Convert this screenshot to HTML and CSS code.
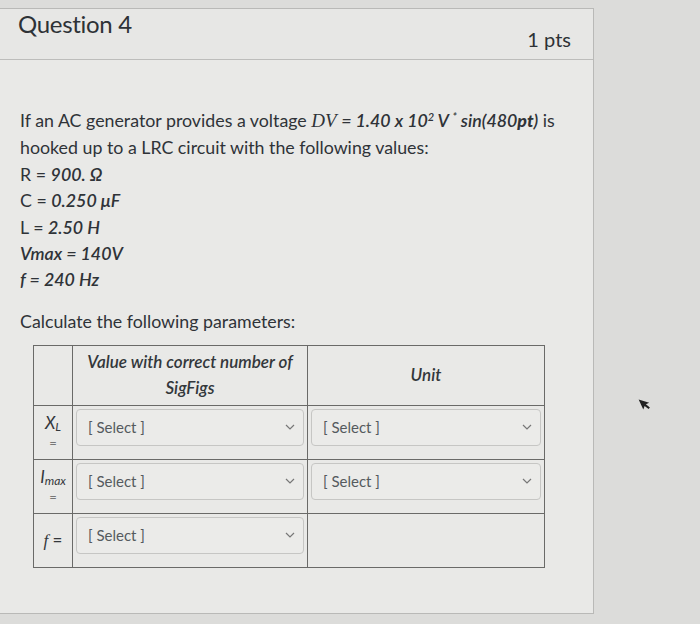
FILE: index.html
```html
<!DOCTYPE html>
<html>
<head>
<meta charset="utf-8">
<link rel="stylesheet" href="styles.css">
</head>
<body>
<div class="screen">
  <div class="card">
    <div class="card-header">
      <h2 class="title">Question 4</h2>
      <span class="pts">1 pts</span>
    </div>
    <div class="card-body">
      <p class="lines">If an AC generator provides a voltage <span class="math">DV</span> <i>= 1.40 x 10<sup>2</sup> V <sup>*</sup> sin(480<b>pt</b>)</i> is<br>
      hooked up to a LRC circuit with the following values:<br>
      R = <i>900. Ω</i><br>
      C = <i>0.250 μF</i><br>
      L = <i>2.50 H</i><br>
      <i>Vmax = 140V</i><br>
      <i>f = 240 Hz</i></p>
      <p class="calc">Calculate the following parameters:</p>
      <table class="grid">
        <colgroup><col class="k1"><col class="k2"><col class="k3"></colgroup>
        <tr class="head">
          <th></th>
          <th class="c2">Value with correct number of SigFigs</th>
          <th>Unit</th>
        </tr>
        <tr class="row">
          <td class="lbl"><i>X<sub>L</sub></i><br><span class="eq">=</span></td>
          <td><div class="sel"><span>[ Select ]</span><svg class="chev" viewBox="0 0 10 6" width="10" height="6"><path d="M1 1 L5 5 L9 1" fill="none" stroke="#777" stroke-width="1.2"/></svg></div></td>
          <td><div class="sel"><span>[ Select ]</span><svg class="chev" viewBox="0 0 10 6" width="10" height="6"><path d="M1 1 L5 5 L9 1" fill="none" stroke="#777" stroke-width="1.2"/></svg></div></td>
        </tr>
        <tr class="row">
          <td class="lbl"><i>I<sub>max</sub></i><br><span class="eq">=</span></td>
          <td><div class="sel"><span>[ Select ]</span><svg class="chev" viewBox="0 0 10 6" width="10" height="6"><path d="M1 1 L5 5 L9 1" fill="none" stroke="#777" stroke-width="1.2"/></svg></div></td>
          <td><div class="sel"><span>[ Select ]</span><svg class="chev" viewBox="0 0 10 6" width="10" height="6"><path d="M1 1 L5 5 L9 1" fill="none" stroke="#777" stroke-width="1.2"/></svg></div></td>
        </tr>
        <tr class="row">
          <td class="lbl last"><i class="fsym">f</i> =</td>
          <td><div class="sel"><span>[ Select ]</span><svg class="chev" viewBox="0 0 10 6" width="10" height="6"><path d="M1 1 L5 5 L9 1" fill="none" stroke="#777" stroke-width="1.2"/></svg></div></td>
          <td></td>
        </tr>
      </table>
    </div>
  </div>
  <svg class="cursor" viewBox="0 0 12 16" width="11" height="15"><path d="M1 1 L1 13 L4 10 L6.5 15 L8.5 14 L6 9 L10 9 Z" fill="#222"/></svg>
</div>
</body>
</html>
```
FILE: styles.css
```css
html, body {
  margin: 0;
  padding: 0;
}
body {
  background: #dcdcda;
  font-family: Lato, "Open Sans", sans-serif;
  color: #2d3b45;
  width: 700px;
  height: 624px;
  overflow: hidden;
}
.screen {
  position: relative;
  width: 700px;
  height: 624px;
}
.card {
  width: 594px;
  height: 606px;
  margin-top: 8px;
  background: #e9e9e7;
  border-right: 1px solid #b9b9b7;
  border-top: 1px solid #b9b9b7;
  border-bottom: 1px solid #b9b9b7;
  box-sizing: border-box;
}
.card-header {
  display: flex;
  justify-content: space-between;
  align-items: flex-start;
  height: 50px;
  border-bottom: 1px solid #bdbdbb;
  background: #e7e7e5;
  padding: 0 22px 0 18px;
}
.title {
  margin: 0;
  font-size: 24px;
  line-height: 30px;
  font-weight: 400;
  color: #2e3236;
  letter-spacing: -0.3px;
}
.pts {
  margin-top: 18px;
  font-size: 20px;
  font-weight: 400;
  color: #2e3236;
}
.card-body {
  padding: 47px 0 0 20px;
  color: #2f3338;
}
.lines {
  margin: 0;
  font-size: 17.8px;
  line-height: 26.4px;
}
.lines i {
  font-weight: 600;
}
.math {
  font-family: "Liberation Serif", serif;
  font-style: italic;
  font-size: 19px;
}
sup {
  font-size: 11px;
  line-height: 0;
  vertical-align: 6px;
}
.calc {
  margin: 15px 0 0 0;
  font-size: 17.8px;
  line-height: 26px;
}
.grid {
  margin: 11px 0 0 13px;
  border-collapse: collapse;
  font-size: 16px;
  table-layout: fixed;
  width: 511px;
}
.k1 { width: 39px; }
.k2 { width: 235px; }
.k3 { width: 237px; }
.grid th, .grid td {
  border: 1.5px solid #6a6a68;
  padding: 0;
}
.grid .head th {
  height: 59px;
  font-style: italic;
  font-weight: 600;
  font-size: 17px;
  line-height: 26px;
  color: #33373b;
}
.grid .head .c2 {
  padding: 0 8px;
}
.row {
  height: 54px;
}
.grid td {
  vertical-align: top;
}
.grid td.lbl {
  text-align: center;
  font-size: 17px;
  line-height: 19px;
  padding-top: 7px;
  color: #33373b;
}
.lbl sub {
  font-size: 12px;
  line-height: 0;
  vertical-align: -2px;
}
.eq {
  color: #777;
  font-size: 13px;
}
.grid td.lbl.last {
  vertical-align: middle;
  padding-top: 0;
}
.fsym {
  font-family: "Liberation Serif", serif;
  font-size: 17px;
}
.sel {
  margin: 3px 3px 0 3px;
  height: 37px;
  border: 1px solid #c6c6c4;
  border-radius: 4px;
  background: #ebebe9;
  display: flex;
  align-items: center;
  justify-content: space-between;
  padding: 0 8px 0 11px;
  font-size: 15px;
  color: #555a5e;
  box-sizing: border-box;
}
.chev {
  display: block;
}
.cursor {
  position: absolute;
  left: 640px;
  top: 388px;
  transform: rotate(-25deg);
}
```
